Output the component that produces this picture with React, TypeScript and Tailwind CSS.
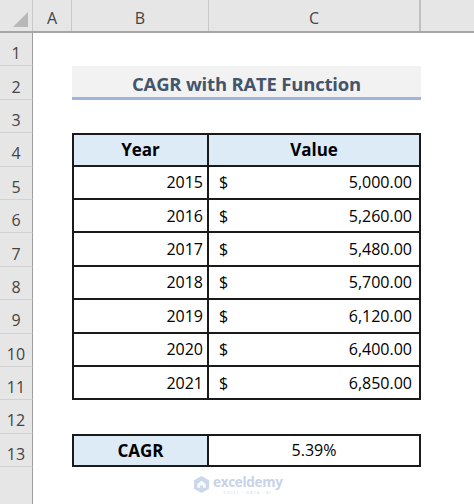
import React from "react";

const rows = [
  { year: 2015, value: "5,000.00" },
  { year: 2016, value: "5,260.00" },
  { year: 2017, value: "5,480.00" },
  { year: 2018, value: "5,700.00" },
  { year: 2019, value: "6,120.00" },
  { year: 2020, value: "6,400.00" },
  { year: 2021, value: "6,850.00" },
];

function RowNum({ n }: { n: number | string }) {
  return (
    <div className="w-[33px] shrink-0 h-full flex items-center justify-center pt-2 bg-[#e6e6e6] border-r border-r-[#9e9e9e] border-b border-b-[#d2d2d2] text-[16px] text-[#444]">
      {n}
    </div>
  );
}

function Row({ n, children }: { n: number; children?: React.ReactNode }) {
  return (
    <div className="flex h-[33.4px]">
      <RowNum n={n} />
      <div className="w-[39px] shrink-0" />
      {children}
    </div>
  );
}

function Logo() {
  return (
    <svg width="17" height="19" viewBox="0 0 18 19">
      <path d="M9 0.5 L17 5 L17 14 L9 18.5 L1 14 L1 5 Z" fill="#cdd7ea" />
      <path d="M4.5 13 L4.5 9 L9 5.5 L13.5 9 L13.5 13 L10.5 13 L10.5 10.5 L7.5 10.5 L7.5 13 Z" fill="#ffffff" opacity="0.85" />
    </svg>
  );
}

export default function App() {
  return (
    <div className="w-[474px] h-[504px] overflow-hidden bg-white text-black" style={{ fontFamily: '"Open Sans", "Liberation Sans", sans-serif' }}>
      {/* column headers */}
      <div className="flex h-[33px] bg-[#e6e6e6] border-b-2 border-b-[#a6a6a6] text-[16px] text-[#444]">
        <div className="w-[33px] shrink-0 relative border-r border-r-[#c8c8c8]">
          <div className="absolute right-[4px] bottom-[4px] w-0 h-0 border-l-[15px] border-l-transparent border-b-[15px] border-b-[#b8b8b8]" />
        </div>
        <div className="w-[39px] shrink-0 flex items-center justify-center pt-1 border-r border-r-[#c8c8c8]">A</div>
        <div className="w-[137px] shrink-0 flex items-center justify-center pt-1 border-r border-r-[#c8c8c8]">B</div>
        <div className="w-[212px] shrink-0 flex items-center justify-center pt-1 border-r-2 border-r-[#c0c0c0]">C</div>
        <div className="flex-1" />
      </div>

      <Row n={1} />
      <Row n={2}>
        <div className="w-[349px] shrink-0 bg-[#f2f2f2] border-b-[3px] border-b-[#9fb4dc] flex items-center justify-center text-[18.5px] tracking-[-0.2px] font-bold text-[#44546a] pt-1">
          CAGR with RATE Function
        </div>
      </Row>
      <Row n={3} />
      <Row n={4}>
        <div className="w-[137px] shrink-0 bg-[#ddebf7] border-2 border-[#1a1a1a] flex items-center justify-center font-bold text-[17px]">
          Year
        </div>
        <div className="w-[212px] shrink-0 bg-[#ddebf7] border-2 border-l-0 border-[#1a1a1a] flex items-center justify-center font-bold text-[17px]">
          Value
        </div>
      </Row>
      {rows.map((r, i) => (
        <Row key={r.year} n={5 + i}>
          <div className="w-[137px] shrink-0 border-2 border-t-0 border-[#1a1a1a] flex items-center justify-end pr-[4px] text-[16px]">
            {r.year}
          </div>
          <div className="w-[212px] shrink-0 border-2 border-t-0 border-l-0 border-[#1a1a1a] flex items-center justify-between pl-[10px] pr-[7px] text-[16px]">
            <span>$</span>
            <span>{r.value}</span>
          </div>
        </Row>
      ))}
      <Row n={12} />
      <Row n={13}>
        <div className="w-[137px] shrink-0 bg-[#ddebf7] border-2 border-[#1a1a1a] flex items-center justify-center font-bold text-[17px]">
          CAGR
        </div>
        <div className="w-[212px] shrink-0 border-2 border-l-0 border-[#1a1a1a] flex items-center justify-center text-[16px]">
          5.39%
        </div>
      </Row>

      {/* empty area below, with watermark */}
      <div className="flex h-[40px]">
        <div className="w-[33px] shrink-0 h-full bg-[#e6e6e6] border-r border-r-[#9e9e9e]" />
        <div className="w-[160px] shrink-0" />
        <div className="flex items-start gap-[3px] pt-[8px]">
          <Logo />
          <div className="flex flex-col items-center">
            <span className="text-[13.5px] font-bold text-[#c9d3e8] tracking-[-0.3px] leading-[15px]">exceldemy</span>
            <span className="text-[4px] text-[#d0d8ea] tracking-[1px] leading-[5px]">EXCEL · DATA · BI</span>
          </div>
        </div>
      </div>
    </div>
  );
}
